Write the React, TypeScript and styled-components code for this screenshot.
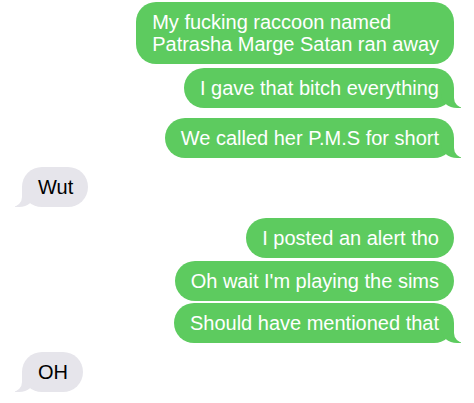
import styled, { createGlobalStyle, css } from 'styled-components'

const GlobalStyle = createGlobalStyle`
    html, body {
        margin: 0;
        padding: 0;
        background: #ffffff;
    }
    body {
        font-family: "Liberation Sans", Arial, sans-serif;
        -webkit-font-smoothing: antialiased;
    }
`

const GREEN = '#5dcb5f'
const GRAY = '#e6e5eb'

const Thread = styled.div`
    width: 474px;
    height: 403px;
    overflow: hidden;
    box-sizing: border-box;
    padding: 2px 20px 0 22px;
    display: flex;
    flex-direction: column;
`

const Row = styled.div<{ $mine?: boolean; $gap: number }>`
    display: flex;
    justify-content: ${p => (p.$mine ? 'flex-end' : 'flex-start')};
    margin-top: ${p => p.$gap}px;
`

const Bubble = styled.div<{ $mine?: boolean; $tail?: boolean }>`
    position: relative;
    box-sizing: border-box;
    padding: 9px 15px 9px 16px;
    border-radius: 20px;
    font-size: 20px;
    line-height: 22px;
    white-space: pre-line;
    background: ${p => (p.$mine ? GREEN : GRAY)};
    color: ${p => (p.$mine ? '#ffffff' : '#000000')};

    ${p =>
        p.$tail &&
        (p.$mine
            ? css`
                  &::before {
                      content: '';
                      position: absolute;
                      bottom: 0;
                      right: -7px;
                      width: 20px;
                      height: 20px;
                      background: ${GREEN};
                      border-bottom-left-radius: 16px 14px;
                  }
                  &::after {
                      content: '';
                      position: absolute;
                      bottom: 0;
                      right: -26px;
                      width: 26px;
                      height: 20px;
                      background: #ffffff;
                      border-bottom-left-radius: 10px;
                  }
              `
            : css`
                  &::before {
                      content: '';
                      position: absolute;
                      bottom: 0;
                      left: -7px;
                      width: 20px;
                      height: 20px;
                      background: ${GRAY};
                      border-bottom-right-radius: 16px 14px;
                  }
                  &::after {
                      content: '';
                      position: absolute;
                      bottom: 0;
                      left: -26px;
                      width: 26px;
                      height: 20px;
                      background: #ffffff;
                      border-bottom-right-radius: 10px;
                  }
              `)}
`

const Text = styled.span`
    position: relative;
    z-index: 1;
`

type Msg = { text: string; mine?: boolean; tail?: boolean; gap: number }

const messages: Msg[] = [
    { text: 'My fucking raccoon named\nPatrasha Marge Satan ran away', mine: true, gap: 0 },
    { text: 'I gave that bitch everything', mine: true, tail: true, gap: 4 },
    { text: 'We called her P.M.S for short', mine: true, tail: true, gap: 10 },
    { text: 'Wut', tail: true, gap: 9 },
    { text: 'I posted an alert tho', mine: true, gap: 11 },
    { text: "Oh wait I'm playing the sims", mine: true, gap: 3 },
    { text: 'Should have mentioned that', mine: true, tail: true, gap: 2 },
    { text: 'OH', tail: true, gap: 9 },
]

const App = function() {
    return (
        <>
            <GlobalStyle />
            <Thread>
                {messages.map((m, i) => (
                    <Row key={i} $mine={m.mine} $gap={m.gap}>
                        <Bubble $mine={m.mine} $tail={m.tail}>
                            <Text>{m.text}</Text>
                        </Bubble>
                    </Row>
                ))}
            </Thread>
        </>
    )
}

export default App
